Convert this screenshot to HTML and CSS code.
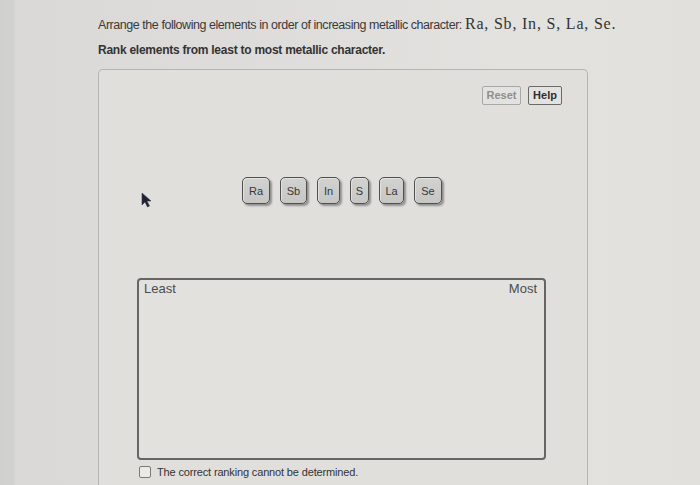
FILE: index.html
```html
<!DOCTYPE html>
<html>
<head>
<meta charset="utf-8">
<link rel="stylesheet" href="styles.css">
</head>
<body>
<div class="screen">
  <div class="content">
    <p class="question">Arrange the following elements in order of increasing metallic character: <span class="elems">Ra, Sb, In, S, La, Se.</span></p>
    <p class="instruction">Rank elements from least to most metallic character.</p>
    <div class="panel">
      <div class="toolbar">
        <button class="btn btn-reset">Reset</button>
        <button class="btn btn-help">Help</button>
      </div>
      <div class="tiles">
        <span class="tile t-ra">Ra</span>
        <span class="tile t-sb">Sb</span>
        <span class="tile t-in">In</span>
        <span class="tile t-s">S</span>
        <span class="tile t-la">La</span>
        <span class="tile t-se">Se</span>
      </div>
      <svg class="cursor" width="12" height="16" viewBox="0 0 12 16">
        <path d="M1 1 L1 13 L4 10 L6.5 15 L8.5 14 L6 9 L10 9 Z" fill="#1e2230" stroke="#3a3e4a" stroke-width="0.6"/>
      </svg>
      <div class="rankbox">
        <div class="rank-labels">
          <span>Least</span>
          <span>Most</span>
        </div>
      </div>
      <label class="cant">
        <span class="checkbox"></span>
        <span class="cant-text">The correct ranking cannot be determined.</span>
      </label>
    </div>
  </div>
</div>
</body>
</html>
```

FILE: styles.css
```css
html, body {
  margin: 0;
  padding: 0;
}
body {
  width: 700px;
  height: 485px;
  overflow: hidden;
  font-family: "Liberation Sans", Arial, sans-serif;
}
.screen {
  width: 700px;
  height: 485px;
  overflow: hidden;
  background:
    linear-gradient(to right, #cfcfcd 0, #d2d2d0 14px, #dad9d7 15px, #dedddb 40%, #e3e2df 75%, #e1e0dd 100%);
}
.content {
  padding: 15px 0 0 98px;
}
.question {
  margin: 0;
  font-size: 12.5px;
  letter-spacing: -0.45px;
  line-height: 18px;
  color: #3a3a3a;
}
.elems {
  font-family: "Liberation Serif", "Times New Roman", serif;
  font-size: 16px;
  letter-spacing: 0.8px;
  color: #333;
}
.instruction {
  margin: 8px 0 0;
  font-size: 12px;
  letter-spacing: -0.25px;
  line-height: 16px;
  font-weight: bold;
  color: #333;
}
.panel {
  position: relative;
  margin-top: 11px;
  width: 488px;
  height: 440px;
  border: 1px solid #b4b4b3;
  border-bottom: none;
  border-radius: 5px 5px 0 0;
  background: #e0dfdc;
}
.toolbar {
  display: flex;
  justify-content: flex-end;
  gap: 7px;
  padding: 16px 25px 0 0;
}
.btn {
  font-family: "Liberation Sans", Arial, sans-serif;
  font-weight: bold;
  font-size: 11px;
  height: 19px;
  padding: 0 3px;
  background: #e3e2df;
  border-radius: 2px;
  line-height: 15px;
}
.btn-reset {
  width: 39px;
  color: #8e8e8e;
  border: 1.5px solid #a8a8a8;
}
.btn-help {
  width: 34px;
  color: #2e2e2e;
  border: 1.5px solid #6a6a6a;
}
.tiles {
  display: flex;
  justify-content: center;
  gap: 10px;
  margin-top: 72px;
  padding-right: 2px;
}
.tile {
  box-sizing: border-box;
  height: 27px;
  display: flex;
  align-items: center;
  justify-content: center;
  font-size: 11px;
  color: #383838;
  background: linear-gradient(#d2d2d1, #c6c6c5);
  border: 1.5px solid #4f4f4f;
  border-radius: 5px;
  box-shadow: inset 1px 1px 0 #e2e2e1, 2px 2px 2px rgba(0,0,0,0.35);
}
.t-ra { width: 28px; }
.t-sb { width: 27px; }
.t-in { width: 23px; }
.t-s  { width: 19px; }
.t-la { width: 25px; }
.t-se { width: 28px; }
.cursor {
  position: absolute;
  left: 42px;
  top: 122px;
}
.rankbox {
  box-sizing: border-box;
  width: 409px;
  height: 182px;
  margin: 74px 0 0 38px;
  border: 2px solid #656565;
  border-radius: 4px;
  background: #e2e1de;
}
.rank-labels {
  display: flex;
  justify-content: space-between;
  padding: 1px 7px 0 5px;
  font-size: 13px;
  line-height: 16px;
  color: #4c4c4c;
}
.cant {
  display: flex;
  align-items: center;
  gap: 6px;
  margin: 5px 0 0 40px;
}
.checkbox {
  box-sizing: border-box;
  width: 12px;
  height: 12px;
  border: 1.5px solid #7a7a7a;
  border-radius: 2px;
  background: #ebeae7;
}
.cant-text {
  font-size: 11px;
  letter-spacing: -0.15px;
  line-height: 14px;
  color: #333;
}
```
